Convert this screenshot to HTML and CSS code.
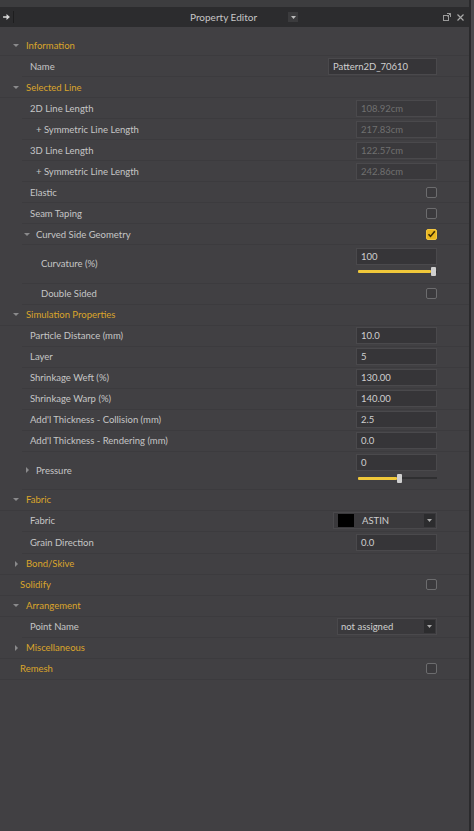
FILE: index.html
```html
<!DOCTYPE html>
<html>
<head>
<meta charset="utf-8">
<link rel="stylesheet" href="styles.css">
</head>
<body>
<div class="window">
  <div class="panel">
    <div class="topstrip"></div>
    <div class="titlebar">
      <div class="tb-left">
        <svg width="7" height="6" viewBox="0 0 8 7"><path d="M0 2.5h4V0l4 3.5L4 7V4.5H0z" fill="#d8d8d8"/></svg>
        <span class="tb-sep"></span>
      </div>
      <div class="tb-center">
        <span class="tb-title">Property Editor</span>
        <span class="tb-drop"><svg width="5" height="3" viewBox="0 0 5 3"><path d="M0 0h5L2.5 3z" fill="#bdbdbd"/></svg></span>
      </div>
      <div class="tb-right">
        <svg width="8" height="8" viewBox="0 0 8 8"><rect x="0.5" y="2.5" width="5" height="5" fill="none" stroke="#9a9a9a"/><path d="M4 0.5h3.5V4M7.5 0.5L4.5 3.5" fill="none" stroke="#9a9a9a"/></svg>
        <svg width="7" height="7" viewBox="0 0 7 7"><path d="M0.5 0.5l6 6M6.5 0.5l-6 6" stroke="#a8a8a8" stroke-width="1.2"/></svg>
      </div>
    </div>

    <div class="list">
      <div class="row sec"><span class="arrow down"></span><span class="stitle">Information</span></div>
      <div class="row l1"><span class="label">Name</span><span class="input wide">Pattern2D_70610</span></div>

      <div class="row sec"><span class="arrow down"></span><span class="stitle">Selected Line</span></div>
      <div class="row l1"><span class="label">2D Line Length</span><span class="input dis">108.92cm</span></div>
      <div class="row l2"><span class="label">+ Symmetric Line Length</span><span class="input dis">217.83cm</span></div>
      <div class="row l1"><span class="label">3D Line Length</span><span class="input dis">122.57cm</span></div>
      <div class="row l2"><span class="label">+ Symmetric Line Length</span><span class="input dis">242.86cm</span></div>
      <div class="row l1"><span class="label">Elastic</span><span class="check"></span></div>
      <div class="row l1"><span class="label">Seam Taping</span><span class="check"></span></div>
      <div class="row sub"><span class="arrow down"></span><span class="label">Curved Side Geometry</span><span class="check on"><svg width="9" height="8" viewBox="0 0 9 8"><path d="M1.5 4.2l2 2.2L7.8 1.2" fill="none" stroke="#3a2a05" stroke-width="1.6"/></svg></span></div>
      <div class="row l3 tall"><span class="label">Curvature (%)</span>
        <div class="ctrl"><span class="input">100</span>
          <div class="slider"><span class="fill" style="width:73px"></span><span class="knob"></span><span class="rest"></span></div>
        </div>
      </div>
      <div class="row l3"><span class="label">Double Sided</span><span class="check"></span></div>

      <div class="row sec"><span class="arrow down"></span><span class="stitle">Simulation Properties</span></div>
      <div class="row l1"><span class="label">Particle Distance (mm)</span><span class="input">10.0</span></div>
      <div class="row l1"><span class="label">Layer</span><span class="input">5</span></div>
      <div class="row l1"><span class="label">Shrinkage Weft (%)</span><span class="input">130.00</span></div>
      <div class="row l1"><span class="label">Shrinkage Warp (%)</span><span class="input">140.00</span></div>
      <div class="row l1"><span class="label">Add'l Thickness - Collision (mm)</span><span class="input">2.5</span></div>
      <div class="row l1"><span class="label">Add'l Thickness - Rendering (mm)</span><span class="input">0.0</span></div>
      <div class="row sub tall2"><span class="arrow right"></span><span class="label">Pressure</span>
        <div class="ctrl"><span class="input">0</span>
          <div class="slider"><span class="fill" style="width:39px"></span><span class="knob"></span><span class="rest"></span></div>
        </div>
      </div>

      <div class="row sec"><span class="arrow down"></span><span class="stitle">Fabric</span></div>
      <div class="row l1"><span class="label">Fabric</span>
        <span class="combo fabric"><span class="swatch"></span><span class="ctext">ASTIN</span><span class="cdrop"><svg width="5" height="3" viewBox="0 0 5 3"><path d="M0 0h5L2.5 3z" fill="#aaa"/></svg></span></span>
      </div>
      <div class="row l1 grain"><span class="label">Grain Direction</span><span class="input">0.0</span></div>
      <div class="row sec"><span class="arrow right"></span><span class="stitle">Bond/Skive</span></div>
      <div class="row sec plain"><span class="stitle">Solidify</span><span class="check"></span></div>
      <div class="row sec"><span class="arrow down"></span><span class="stitle">Arrangement</span></div>
      <div class="row l1"><span class="label">Point Name</span>
        <span class="combo point"><span class="ctext">not assigned</span><span class="cdrop"><svg width="5" height="3" viewBox="0 0 5 3"><path d="M0 0h5L2.5 3z" fill="#aaa"/></svg></span></span>
      </div>
      <div class="row sec"><span class="arrow right"></span><span class="stitle">Miscellaneous</span></div>
      <div class="row sec plain"><span class="stitle">Remesh</span><span class="check"></span></div>
    </div>
  </div>
  <div class="edge"></div>
</div>
</body>
</html>
```

FILE: styles.css
```css
* { box-sizing: border-box; }
html, body {
  margin: 0;
  padding: 0;
  width: 474px;
  height: 831px;
  overflow: hidden;
  background: #414043;
  font-family: Lato, "Open Sans", sans-serif;
  font-size: 9.5px;
  color: #c9c9c9;
}
.window {
  display: flex;
  height: 831px;
}
.panel {
  width: 469px;
  background: #414043;
  display: flex;
  flex-direction: column;
}
.edge {
  width: 5px;
  background: linear-gradient(to right, #2a2a2c 0, #2a2a2c 2px, #4b4a4d 2px);
}
.topstrip {
  height: 7px;
  background: #3d3d3f;
}
.titlebar {
  height: 20px;
  background: #2c2c2e;
  display: flex;
  align-items: center;
  position: relative;
}
.tb-left {
  display: flex;
  align-items: center;
  padding-left: 3px;
  gap: 3px;
  width: 40px;
}
.tb-sep {
  width: 1px;
  height: 12px;
  background: #1e1e1f;
}
.tb-center {
  flex: 1;
  display: flex;
  align-items: center;
  justify-content: flex-start;
  padding-left: 150px;
  gap: 31px;
}
.tb-title {
  color: #c6c6c6;
  font-size: 10px;
}
.tb-drop {
  width: 10px;
  height: 10px;
  background: #3b3b3d;
  display: flex;
  align-items: center;
  justify-content: center;
}
.tb-right {
  display: flex;
  align-items: center;
  gap: 6px;
  padding-right: 5px;
}
.list {
  padding-top: 8px;
  display: flex;
  flex-direction: column;
}
.row {
  height: 21px;
  display: flex;
  align-items: center;
  padding-right: 32px;
  position: relative;
  border-bottom: 1px solid #3c3b3e;
  margin-left: 22px;
}
.row.sec {
  margin-left: 0;
  padding-left: 12px;
}
.row.sec.plain { padding-left: 20px; }
.row.l1 { padding-left: 8px; }
.row.l2 { padding-left: 14px; }
.row.l3 { padding-left: 19px; }
.row.sub { padding-left: 2px; }
.row.tall { height: 38.5px; }
.row.tall2 { height: 38px; }
.row.grain { height: 22px; }
.label {
  flex: 1;
  color: #c6c6c6;
}
.stitle {
  flex: 1;
  color: #dba52b;
}
.arrow {
  width: 12px;
  display: inline-flex;
  justify-content: flex-start;
  align-items: center;
  height: 10px;
}
.row.sec .arrow { width: 14px; padding-left: 1px; }
.row.sub .arrow { width: 12px; }
.arrow.down::before {
  content: "";
  border-left: 3px solid transparent;
  border-right: 3px solid transparent;
  border-top: 3px solid #8a8a8c;
}
.arrow.right::before {
  content: "";
  border-top: 3px solid transparent;
  border-bottom: 3px solid transparent;
  border-left: 3px solid #8a8a8c;
  margin-left: 2px;
}
.input {
  width: 81px;
  height: 17px;
  background: #363538;
  border: 1px solid #4a494c;
  color: #cfcfcf;
  padding-left: 4px;
  display: flex;
  align-items: center;
  font-size: 9.5px;
}
.input.wide {
  width: 109px;
}
.input.dis {
  color: #707070;
  background: #3a393c;
}
.check {
  width: 11px;
  height: 11px;
  border: 1px solid #6c6c6e;
  border-radius: 2px;
  background: #3b3a3d;
  display: flex;
  align-items: center;
  justify-content: center;
}
.check.on {
  background: #e9b720;
  border-color: #f2c640;
}
.ctrl {
  width: 81px;
  display: flex;
  flex-direction: column;
  align-self: flex-start;
  gap: 2px;
  padding-top: 3px;
}
.tall2 .ctrl {
  padding-top: 2px;
  gap: 3px;
}
.slider {
  height: 9px;
  display: flex;
  align-items: center;
  padding-left: 2px;
}
.slider .fill {
  height: 3px;
  background: #f0c83a;
  border-radius: 1px;
}
.slider .knob {
  width: 5px;
  height: 9px;
  background: #cfcfcf;
  border-radius: 1px;
}
.slider .rest {
  flex: 1;
  height: 2px;
  background: #2f2f31;
}
.combo {
  height: 17px;
  border: 1px solid #4a494c;
  background: #3a393c;
  display: flex;
  align-items: center;
}
.combo.fabric {
  width: 104px;
  padding-left: 4px;
}
.combo.point {
  width: 100px;
  padding-left: 3px;
}
.swatch {
  width: 16px;
  height: 13px;
  background: #000;
}
.fabric .ctext { padding-left: 8px; }
.ctext {
  flex: 1;
  color: #cfcfcf;
}
.cdrop {
  width: 11px;
  height: 13px;
  background: #2c2c2e;
  margin-right: 1px;
  display: flex;
  align-items: center;
  justify-content: center;
}
```
